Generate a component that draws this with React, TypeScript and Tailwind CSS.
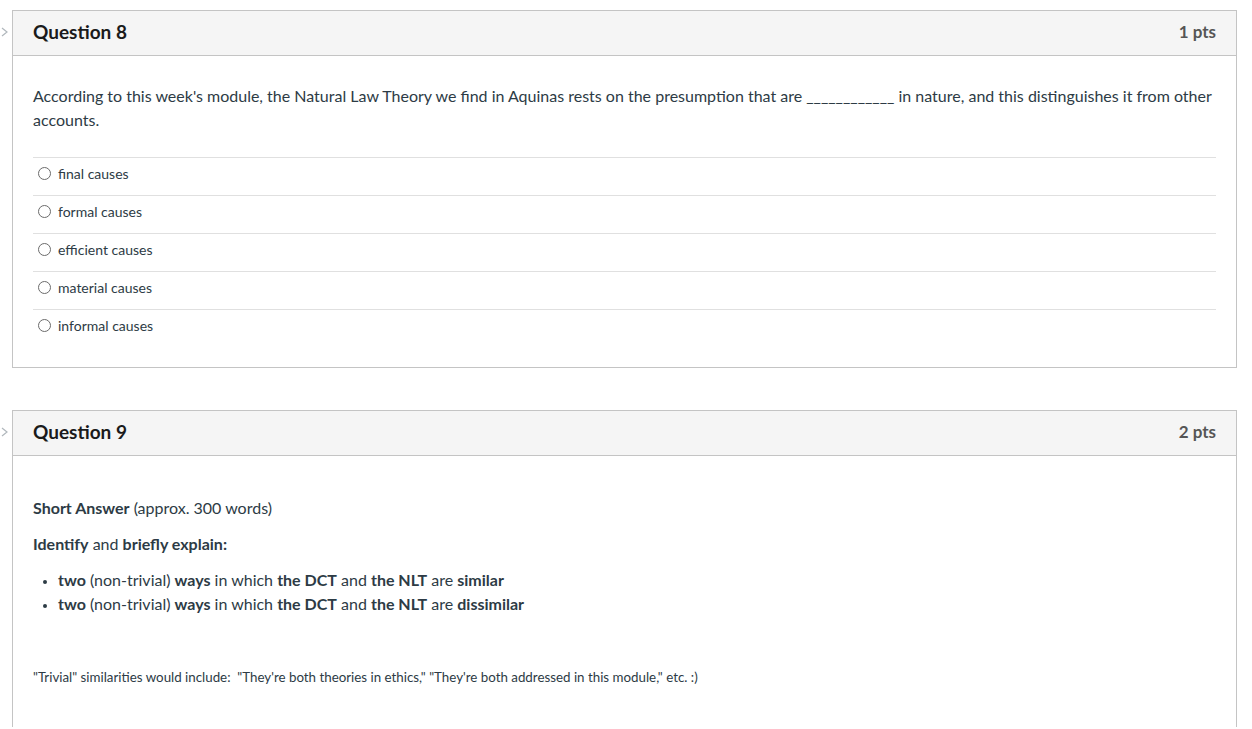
import React from 'react';

const options = ['final causes', 'formal causes', 'efficient causes', 'material causes', 'informal causes'];

function Chevron() {
  return (
    <svg className="absolute left-[-15px] top-[15px]" width="12" height="12" viewBox="0 0 12 12" fill="none">
      <path d="M4 2l5 4-5 4" stroke="#b0b7bc" strokeWidth="1.2" />
    </svg>
  );
}

function Header({ title, pts }: { title: string; pts: string }) {
  return (
    <div className="relative flex h-[45px] items-center justify-between border-b border-[#c4c4c4] bg-[#f5f5f5] px-[20px] pb-[2px]">
      <Chevron />
      <h2 className="text-[19px] font-bold text-[#1b1b1b]">{title}</h2>
      <span className="text-[17px] font-bold text-[#555555]">{pts}</span>
    </div>
  );
}

export default function App() {
  return (
    <div className="min-h-[729px] bg-white pl-[12px] pr-[15px] pt-[10px] text-[#2d3b45]" style={{ fontFamily: 'Lato, "Noto Sans", sans-serif' }}>
      <section className="border border-[#c4c4c4]">
        <Header title="Question 8" pts="1 pts" />
        <div className="px-[20px] pb-[20px] pt-[28px]">
          <p className="text-[16px] leading-[24px] text-[#2d3b45]">
            According to this week's module, the Natural Law Theory we find in Aquinas rests on the presumption that are ____________ in nature, and this distinguishes it from other accounts.
          </p>
          <div className="mt-[25px]">
            {options.map((o) => (
              <div key={o} className="flex h-[38px] items-center gap-[7px] border-t border-[#e0e0e0] pb-[6px] pl-[5px]">
                <span className="h-[13px] w-[13px] rounded-full border border-[#6b6b6b] bg-white" />
                <span className="text-[14px] text-[#2d3b45]">{o}</span>
              </div>
            ))}
          </div>
        </div>
      </section>

      <section className="mt-[42px] border border-b-0 border-[#c4c4c4]">
        <Header title="Question 9" pts="2 pts" />
        <div className="px-[20px] pb-[40px] pt-[40px] text-[16px] leading-[24px]">
          <p>
            <strong>Short Answer</strong> (approx. 300 words)
          </p>
          <p className="mt-[12px]">
            <strong>Identify</strong> and <strong>briefly explain:</strong>
          </p>
          <ul className="mt-[12px] list-disc pl-[25px] marker:text-[13px]">
            <li>
              <strong>two</strong> (non-trivial) <strong>ways</strong> in which <strong>the DCT</strong> and <strong>the NLT</strong> are <strong>similar</strong>
            </li>
            <li>
              <strong>two</strong> (non-trivial) <strong>ways</strong> in which <strong>the DCT</strong> and <strong>the NLT</strong> are <strong>dissimilar</strong>
            </li>
          </ul>
          <p className="mt-[51px] text-[13.33px] leading-[20px]">
            "Trivial" similarities would include:&nbsp; "They're both theories in ethics," "They're both addressed in this module," etc. :)
          </p>
        </div>
      </section>
    </div>
  );
}
